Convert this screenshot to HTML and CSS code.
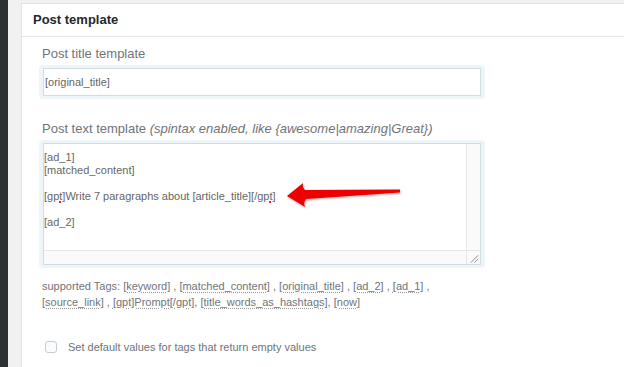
FILE: index.html
```html
<!DOCTYPE html>
<html>
<head>
<meta charset="utf-8">
<link rel="stylesheet" href="styles.css">
</head>
<body>
<div class="sidebar"></div>
<div class="main">
  <div class="panel">
    <div class="panel-head">Post template</div>
    <div class="panel-body">
      <label class="field-label">Post title template</label>
      <div class="glow">
        <div class="input">[original_title]</div>
      </div>

      <label class="field-label second">Post text template <em>(spintax enabled, like {awesome|amazing|Great})</em></label>
      <div class="glow">
        <div class="textarea">
          <div class="ta-content">[ad_1]
[matched_content]

[<span class="spell">gpt</span>]Write 7 paragraphs about [article_title][/<span class="spell">gpt</span>]

[ad_2]</div>
          <div class="vbar"></div>
          <div class="hbar"></div>
          <div class="corner">
            <svg width="14" height="14" viewBox="0 0 14 14"><path d="M4 12 L12 4 M8 12 L12 8" stroke="#8a8a8a" stroke-width="1" fill="none"/></svg>
          </div>
        </div>
      </div>

      <p class="tags">supported Tags: <span class="tag">[keyword]</span> , <span class="tag">[matched_content]</span> , <span class="tag">[original_title]</span> , <span class="tag">[ad_2]</span> , <span class="tag">[ad_1]</span> ,<br><span class="tag">[source_link]</span> , <span class="tag">[gpt]Prompt[/gpt]</span>, <span class="tag">[title_words_as_hashtags]</span>, <span class="tag">[now]</span></p>

      <div class="check-row">
        <span class="checkbox"></span>
        <span class="check-label">Set default values for tags that return empty values</span>
      </div>
    </div>
  </div>
</div>
<svg class="arrow" width="124" height="34" viewBox="282 178 124 34">
  <defs>
    <filter id="sh" x="-10%" y="-30%" width="120%" height="160%">
      <feDropShadow dx="0.5" dy="1" stdDeviation="0.8" flood-color="#000" flood-opacity="0.35"/>
    </filter>
  </defs>
  <path d="M287 196 L303 183 Q302 187 305 190 L400 189.5 L400 192.5 L306 199 Q303 203 305 207 Z" fill="#ec0000" filter="url(#sh)"/>
</svg>
</body>
</html>
```
FILE: styles.css
```css
html, body {
  margin: 0;
  padding: 0;
}
body {
  background: #f1f1f1;
  font-family: "Liberation Sans", Arial, sans-serif;
  display: flex;
  width: 624px;
  height: 367px;
  overflow: hidden;
  position: relative;
}
.sidebar {
  width: 8px;
  flex: none;
  background: #2c3136;
}
.main {
  flex: 1;
  padding: 3px 0 0 13px;
  display: flex;
}
.panel {
  flex: 1;
  background: #fff;
  border: 1px solid #e2e2e2;
  border-right: 0;
  border-bottom: 0;
}
.panel-head {
  height: 32px;
  line-height: 32px;
  padding-left: 11px;
  font-size: 13px;
  font-weight: bold;
  color: #23282d;
  border-bottom: 1px solid #e6e6e6;
}
.panel-body {
  padding: 8px 0 0 20px;
}
.field-label {
  display: block;
  font-size: 13px;
  line-height: 18px;
  color: #6f7479;
  margin-bottom: 2px;
}
.field-label.second {
  margin-top: 21px;
}
.field-label em {
  font-style: italic;
}
.glow {
  margin-left: -3px;
  width: 438px;
  padding: 3px 4px 3px 4px;
  background: #eef5f8;
  border-radius: 4px;
}
.input {
  box-sizing: border-box;
  height: 28px;
  border: 1px solid #d2dde2;
  background: #fff;
  font-size: 11px;
  line-height: 26px;
  padding-left: 1px;
  color: #666;
}
.textarea {
  box-sizing: border-box;
  height: 122px;
  border: 1px solid #d2dde2;
  background: #fff;
  display: grid;
  grid-template-columns: 1fr 14px;
  grid-template-rows: 1fr 14px;
}
.ta-content {
  white-space: pre;
  font-size: 11px;
  line-height: 13px;
  color: #666;
  padding: 7px 0 0 0;
  overflow: hidden;
}
.spell {
  text-decoration: underline dotted #e22;
  text-decoration-thickness: 2px;
  text-underline-offset: 1px;
}
.vbar {
  background: #fafafa;
  border-left: 1px solid #e6e6e6;
}
.hbar {
  background: #fafafa;
  border-top: 1px solid #e6e6e6;
}
.corner {
  background: #fafafa;
  border-top: 1px solid #e6e6e6;
  border-left: 1px solid #e6e6e6;
  display: flex;
  overflow: hidden;
}
.tags {
  margin: 10px 0 0 0;
  font-size: 11px;
  line-height: 16px;
  color: #6f7479;
}
.tag {
  text-decoration: underline dotted #999;
  text-underline-offset: 2px;
}
.check-row {
  margin-top: 29px;
  display: flex;
  align-items: center;
  height: 16px;
  padding-left: 3px;
}
.checkbox {
  box-sizing: border-box;
  width: 12px;
  height: 12px;
  border: 1px solid #c4ccd2;
  border-radius: 3px;
  background: #fbfcfd;
  margin-right: 11px;
}
.check-label {
  font-size: 11px;
  color: #6f7479;
}
.arrow {
  position: absolute;
  left: 282px;
  top: 178px;
}
```
